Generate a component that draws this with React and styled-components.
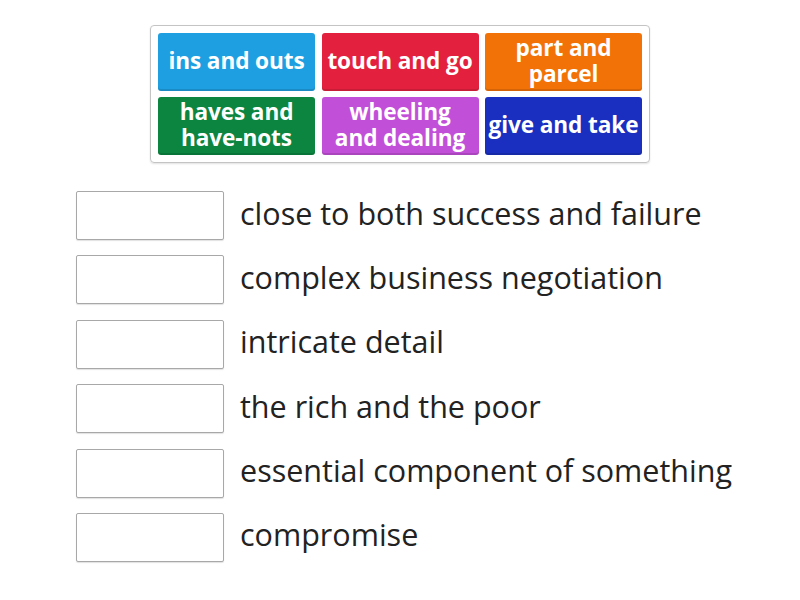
import React from "react";
import styled, { createGlobalStyle } from "styled-components";

const Global = createGlobalStyle`
  html, body { margin: 0; padding: 0; background: #fff; }
  body { font-family: "Open Sans", "DejaVu Sans", sans-serif; }
`;

const Page = styled.div`
  width: 800px;
  height: 600px;
  padding-top: 25px;
  box-sizing: border-box;
`;

const Bank = styled.div`
  width: 500px;
  margin: 0 auto;
  box-sizing: border-box;
  border: 1px solid #c4c4c4;
  border-radius: 4px;
  box-shadow: 0 1px 2px rgba(0,0,0,0.12);
  padding: 7px;
  display: grid;
  grid-template-columns: repeat(3, 157px);
  grid-auto-rows: 58px;
  column-gap: 6.5px;
  row-gap: 6px;
`;

const Tile = styled.div`
  background: ${p => p.$bg};
  border-radius: 3px;
  color: #fff;
  font-weight: 700;
  font-size: 22.6px;
  line-height: 26px;
  text-align: center;
  display: flex;
  flex-direction: column;
  align-items: center;
  justify-content: center;
  padding: 0 2px 3px;
  box-shadow: inset 0 -2px 0 rgba(0,0,0,0.12);
  letter-spacing: -0.1px;
`;

const Line = styled.span`
  display: block;
  white-space: nowrap;
`;

const List = styled.div`
  margin-top: 28px;
  padding-left: 76px;
  display: flex;
  flex-direction: column;
  gap: 15.4px;
`;

const Row = styled.div`
  display: flex;
  align-items: center;
  height: 49px;
`;

const Slot = styled.div`
  width: 148px;
  height: 49px;
  box-sizing: border-box;
  border: 1px solid #a8a8a8;
  border-radius: 2px;
  box-shadow: 0 1px 1px rgba(0,0,0,0.12);
  background: #fff;
  flex: none;
`;

const Clue = styled.div`
  margin-left: 16px;
  font-size: 30.5px;
  color: #222;
  line-height: 38px;
  margin-top: -6px;
`;

const tiles = [
  [["ins and outs"], "#1e9fe1"],
  [["touch and go"], "#e3213e"],
  [["part and", "parcel"], "#f27208"],
  [["haves and", "have-nots"], "#0b8540"],
  [["wheeling", "and dealing"], "#c24fd8"],
  [["give and take"], "#1a2fbf"],
];

const clues = [
  "close to both success and failure",
  "complex business negotiation",
  "intricate detail",
  "the rich and the poor",
  "essential component of something",
  "compromise",
];

export default function App() {
  return (
    <Page>
      <Global />
      <Bank>
        {tiles.map(([lines, c]) => (
          <Tile key={lines.join(" ")} $bg={c}>
            {lines.map(l => (
              <Line key={l}>{l}</Line>
            ))}
          </Tile>
        ))}
      </Bank>
      <List>
        {clues.map(c => (
          <Row key={c}>
            <Slot />
            <Clue>{c}</Clue>
          </Row>
        ))}
      </List>
    </Page>
  );
}
